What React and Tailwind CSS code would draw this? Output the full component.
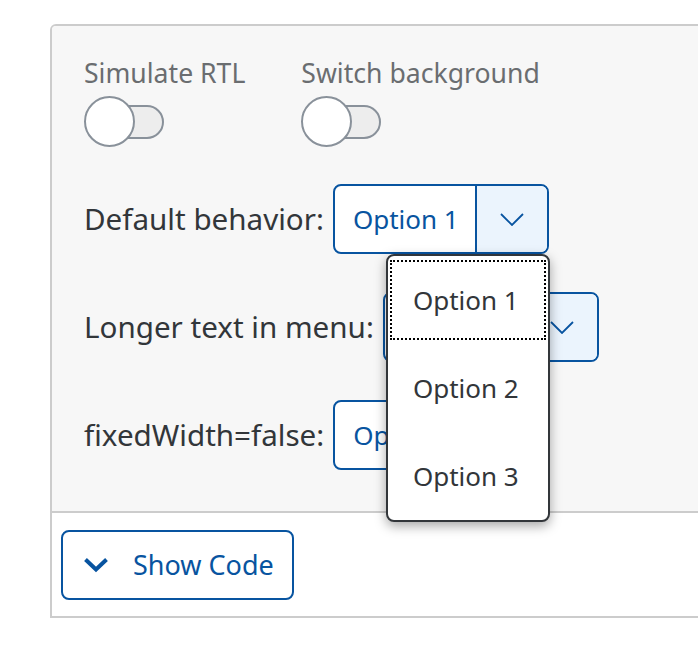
import React from 'react'

const BLUE = '#0854a0'

function Toggle() {
    return (
        <div className="relative w-[80px] h-[51px] mt-[6px]">
            <div className="absolute left-[2px] top-[9px] w-[78px] h-[34px] rounded-full bg-[#ededed] border-2 border-[#89919a]" />
            <div className="absolute left-0 top-0 w-[51px] h-[51px] rounded-full bg-white border-2 border-[#89919a]" />
        </div>
    )
}

function Chevron({ thick }) {
    if (thick) {
        return (
            <svg width="28" height="18" viewBox="0 0 28 18" fill="none">
                <polyline points="3.5,3.5 14,13.5 24.5,3.5" stroke={BLUE} strokeWidth="4" strokeLinejoin="miter" />
            </svg>
        )
    }
    return (
        <svg width="24" height="13" viewBox="0 0 24 13" fill="none">
            <polyline points="1,1 12,12 23,1" stroke={BLUE} strokeWidth="1.8" />
        </svg>
    )
}

function Select({ open }) {
    return (
        <div className="relative">
            <div className="flex h-[70px] w-[216px] rounded-[8px] border-2 border-[#0854a0] bg-white overflow-hidden">
                <div className="flex-1 flex items-center pl-[18px] text-[26px] text-[#0854a0]">Option 1</div>
                <div className="w-[72px] flex items-center justify-center border-l-2 border-[#0854a0] bg-[#ebf4fd]">
                    <Chevron />
                </div>
            </div>
            {open && (
                <div className="absolute z-10 top-[70px] right-[-1px] w-[164px] bg-white border-2 border-[#32363a] rounded-[8px] shadow-[0_4px_12px_rgba(0,0,0,0.35)]">
                    <div className="h-[88px] px-[2px] py-[4px]">
                        <div className="h-full border-2 border-dotted border-black flex items-center pl-[21px] text-[26px] text-[#32363a]">Option 1</div>
                    </div>
                    <div className="h-[88px] flex items-center pl-[25px] text-[26px] text-[#32363a]">Option 2</div>
                    <div className="h-[88px] flex items-center pl-[25px] text-[26px] text-[#32363a]">Option 3</div>
                </div>
            )}
        </div>
    )
}

function Row({ label, open }) {
    return (
        <div className="flex items-center gap-[9px]">
            <span className="text-[29.6px] text-[#32363a]">{label}</span>
            <Select open={open} />
        </div>
    )
}

export default function App() {
    return (
        <div className="w-full h-[662px] overflow-hidden bg-white pt-[24px] pl-[50px]" style={{ fontFamily: '"Noto Sans", sans-serif' }}>
            <div className="w-[720px] border-2 border-[#cccccc] rounded-tl-[6px] overflow-hidden">
                <div className="bg-[#f7f7f7] pl-[32px] pt-[30px] pb-[41px]">
                    <div className="flex gap-[56px]">
                        <div>
                            <div className="text-[26.6px] leading-[34px] text-[#6a6d70]">Simulate RTL</div>
                            <Toggle />
                        </div>
                        <div>
                            <div className="text-[26.6px] leading-[34px] text-[#6a6d70]">Switch background</div>
                            <Toggle />
                        </div>
                    </div>
                    <div className="flex flex-col gap-[38px] mt-[37px]">
                        <Row label="Default behavior:" open />
                        <Row label="Longer text in menu:" />
                        <Row label="fixedWidth=false:" />
                    </div>
                </div>
                <div className="border-t-2 border-[#cccccc] bg-white pl-[9px] pt-[17px] pb-[16px]">
                    <button className="h-[70px] flex items-center gap-[23px] pl-[19px] pr-[18px] rounded-[8px] border-2 border-[#0854a0] bg-white text-[27px] text-[#0854a0]">
                        <Chevron thick />
                        <span>Show Code</span>
                    </button>
                </div>
            </div>
        </div>
    )
}
